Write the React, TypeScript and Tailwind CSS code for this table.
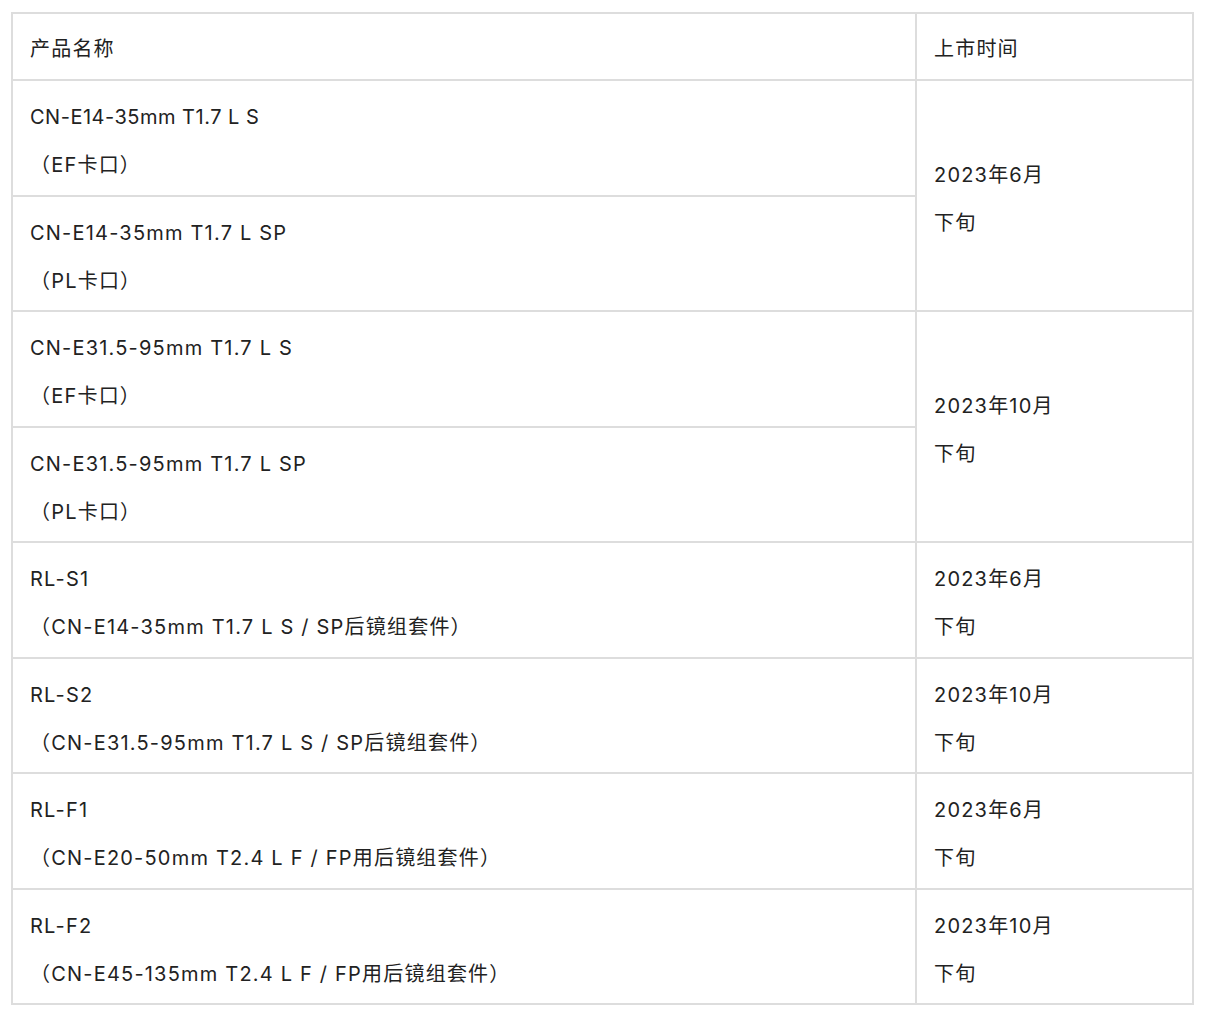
import React from "react";

type Row = { name: string[]; date?: string[]; span?: number; tightFirst?: boolean };

const rows: Row[] = [
  { name: ["CN-E14-35mm T1.7 L S", "（EF卡口）"], date: ["2023年6月", "下旬"], span: 2, tightFirst: true },
  { name: ["CN-E14-35mm T1.7 L SP", "（PL卡口）"] },
  { name: ["CN-E31.5-95mm T1.7 L S", "（EF卡口）"], date: ["2023年10月", "下旬"], span: 2 },
  { name: ["CN-E31.5-95mm T1.7 L SP", "（PL卡口）"] },
  { name: ["RL-S1", "（CN-E14-35mm T1.7 L S / SP后镜组套件）"], date: ["2023年6月", "下旬"], span: 1 },
  { name: ["RL-S2", "（CN-E31.5-95mm T1.7 L S / SP后镜组套件）"], date: ["2023年10月", "下旬"], span: 1 },
  { name: ["RL-F1", "（CN-E20-50mm T2.4 L F / FP用后镜组套件）"], date: ["2023年6月", "下旬"], span: 1 },
  { name: ["RL-F2", "（CN-E45-135mm T2.4 L F / FP用后镜组套件）"], date: ["2023年10月", "下旬"], span: 1 },
];

export default function App() {
  return (
    <div
      className="bg-white min-h-[1016px] pt-[12px] pl-[11px]"
      style={{ fontFamily: 'Inter, "Noto Sans CJK SC", sans-serif' }}
    >
      <table className="w-[1183px] border-collapse border-2 border-[#dddddd] text-[20px] leading-[48px] tracking-[1.2px] text-[#222222]">
        <thead>
          <tr>
            <th className="w-[904px] border-2 border-[#dddddd] px-[17px] pt-[10.5px] pb-[6.5px] text-left font-normal">
              产品名称
            </th>
            <th className="border-2 border-[#dddddd] px-[17px] pt-[10.5px] pb-[6.5px] text-left font-normal">
              上市时间
            </th>
          </tr>
        </thead>
        <tbody>
          {rows.map((r, i) => (
            <tr key={i}>
              <td className="border-2 border-[#dddddd] px-[17px] pt-[12.25px] pb-[5.25px] align-middle">
                {r.name.map((l, j) => (
                  <div key={j} className={r.tightFirst && j === 0 ? "tracking-[0.5px]" : ""}>
                    {l}
                  </div>
                ))}
              </td>
              {r.date && (
                <td
                  rowSpan={r.span}
                  className="border-2 border-[#dddddd] px-[17px] pt-[12.25px] pb-[5.25px] align-middle"
                >
                  {r.date.map((l, j) => (
                    <div key={j}>{l}</div>
                  ))}
                </td>
              )}
            </tr>
          ))}
        </tbody>
      </table>
    </div>
  );
}
